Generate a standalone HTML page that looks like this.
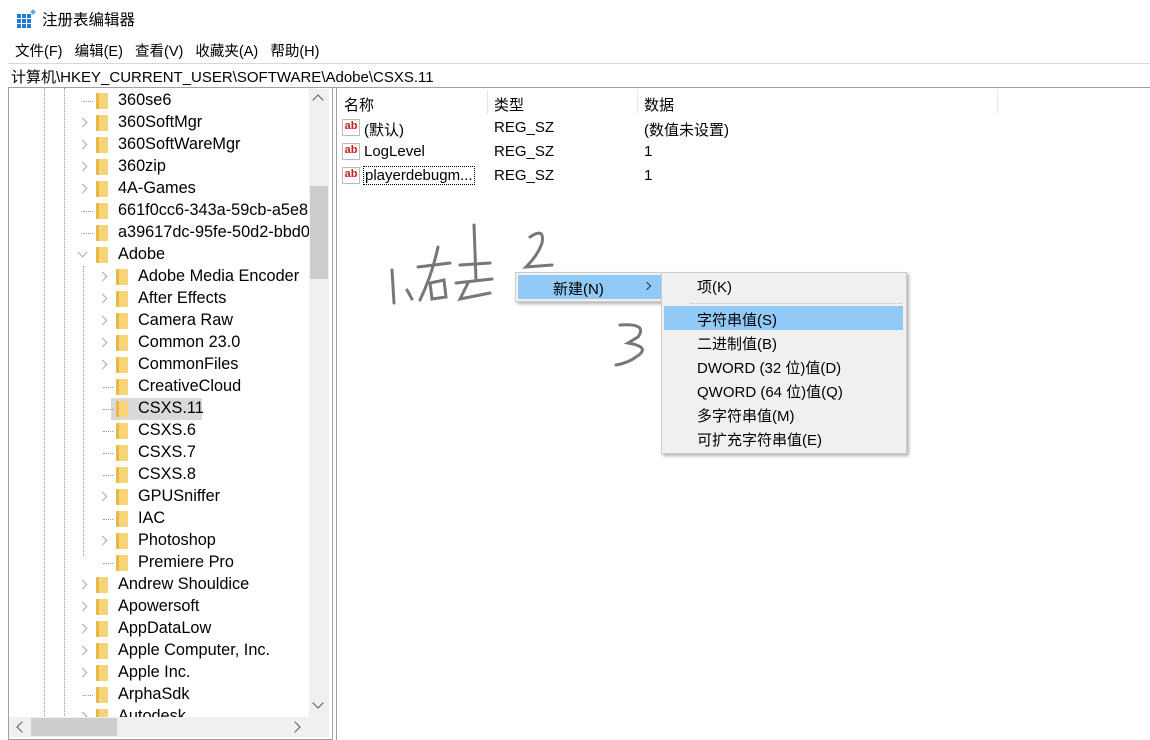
<!DOCTYPE html><html><head><meta charset="utf-8"><style>
*{margin:0;padding:0;box-sizing:border-box}
body{width:1150px;height:740px;background:#fff;font-family:"Liberation Sans","Noto Sans CJK SC",sans-serif;font-size:15px;color:#000;position:relative;overflow:hidden}
.a{position:absolute;white-space:nowrap}
.f{position:absolute;width:12px;height:16px;background:linear-gradient(90deg,#e8b840 0 3px,#f7d37a 3px);border-radius:1px}
.ch{position:absolute;width:7px;height:7px;border-right:1.5px solid #aaa;border-bottom:1.5px solid #aaa;transform:rotate(-45deg)}
.dv{position:absolute;border-left:1px dotted #999;width:0}
.dh{position:absolute;border-top:1px dotted #999;height:0;width:10px}
.ab{position:absolute;width:18px;height:17px;border:1px solid #bbb;background:#fff;font-size:11px;font-weight:bold;color:#c62020;line-height:13px;text-align:center}
.t{font-size:16.3px}
</style></head><body>
<svg class="a" style="left:17px;top:9px" width="20" height="20" viewBox="0 0 20 20"><g fill="#1e7bd0"><rect x="0" y="5" width="4" height="4"/><rect x="5" y="5" width="4" height="4"/><rect x="10" y="5" width="4" height="4"/><rect x="0" y="10" width="4" height="4"/><rect x="5" y="10" width="4" height="4"/><rect x="10" y="10" width="4" height="4"/><rect x="0" y="15" width="4" height="4"/><rect x="5" y="15" width="4" height="4"/><rect x="10" y="15" width="4" height="4"/></g><rect x="14" y="1" width="4" height="4" fill="#5aa8e8" transform="rotate(45 16 3)"/></svg>
<div class="a" style="left:42px;top:8px;font-size:15.5px">注册表编辑器</div>
<div class="a" style="left:15px;top:40px;font-size:14.5px;word-spacing:0">文件(F)&nbsp;&nbsp;&nbsp;编辑(E)&nbsp;&nbsp;&nbsp;查看(V)&nbsp;&nbsp;&nbsp;收藏夹(A)&nbsp;&nbsp;&nbsp;帮助(H)</div>
<div class="a" style="left:8px;top:63px;width:1142px;height:25px;border-top:1px solid #d8d8d8;border-bottom:1px solid #a0a0a0"></div>
<div class="a" style="left:11px;top:66px;font-size:15px">计算机\HKEY_CURRENT_USER\SOFTWARE\Adobe\CSXS.11</div>
<div class="a" style="left:8px;top:88px;width:325px;height:652px;border:1px solid #a0a0a0;border-top:none;overflow:hidden">
<div class="dv" style="left:35px;top:0;height:640px"></div>
<div class="dv" style="left:55px;top:0;height:640px"></div>
</div>
<div class="dv" style="left:83px;top:266px;height:290px"></div>
<div id="tree"></div>
<div class="a" style="left:309px;top:89px;width:20px;height:628px;background:#f0f0f0"></div>
<div class="a" style="left:310px;top:186px;width:18px;height:93px;background:#cdcdcd"></div>
<div class="a" style="left:314px;top:96px;width:8px;height:8px;border-left:1.5px solid #555;border-top:1.5px solid #555;transform:rotate(45deg)"></div>
<div class="a" style="left:314px;top:699px;width:8px;height:8px;border-right:1.5px solid #555;border-bottom:1.5px solid #555;transform:rotate(45deg)"></div>
<div class="a" style="left:9px;top:717px;width:300px;height:20px;background:#f0f0f0"></div>
<div class="a" style="left:31px;top:718px;width:86px;height:18px;background:#cdcdcd"></div>
<div class="a" style="left:18px;top:723px;width:8px;height:8px;border-left:1.5px solid #555;border-bottom:1.5px solid #555;transform:rotate(45deg)"></div>
<div class="a" style="left:291px;top:723px;width:8px;height:8px;border-right:1.5px solid #555;border-top:1.5px solid #555;transform:rotate(45deg)"></div>
<div class="a" style="left:309px;top:717px;width:20px;height:20px;background:#f0f0f0"></div>
<div class="a" style="left:336px;top:88px;width:814px;height:652px;border-left:1px solid #a0a0a0"></div>
<div class="a" style="left:487px;top:90px;height:24px;border-left:1px solid #e5e5e5"></div>
<div class="a" style="left:637px;top:90px;height:24px;border-left:1px solid #e5e5e5"></div>
<div class="a" style="left:997px;top:90px;height:24px;border-left:1px solid #e5e5e5"></div>
<div class="a" style="left:344px;top:94px">名称</div>
<div class="a" style="left:494px;top:94px">类型</div>
<div class="a" style="left:644px;top:94px">数据</div>
<div class="ab" style="left:342px;top:119px">ab</div>
<div class="ab" style="left:342px;top:143px">ab</div>
<div class="ab" style="left:342px;top:167px">ab</div>
<div class="a" style="left:364px;top:119px">(默认)</div>
<div class="a" style="left:364px;top:143px">LogLevel</div>
<div class="a" style="left:363px;top:166px;border:1px dotted #000;padding:0 1px">playerdebugm...</div>
<div class="a" style="left:494px;top:119px">REG_SZ</div>
<div class="a" style="left:494px;top:143px">REG_SZ</div>
<div class="a" style="left:494px;top:167px">REG_SZ</div>
<div class="a" style="left:644px;top:119px">(数值未设置)</div>
<div class="a" style="left:644px;top:143px">1</div>
<div class="a" style="left:644px;top:167px">1</div>
<svg class="a" style="left:380px;top:215px" width="290" height="160" viewBox="0 0 290 160" fill="none" stroke="#777" stroke-width="3" stroke-linecap="round">
<path d="M12 55 L14 88"/><path d="M27 75 L32 84"/>
<path d="M38 52 L70 48"/><path d="M58 32 Q52 60 40 85"/><path d="M50 68 L64 65 L66 82 L52 84 Z"/>
<path d="M80 50 L110 48"/><path d="M94 10 L96 65"/><path d="M76 68 L112 64"/><path d="M88 68 Q82 80 80 84 L110 78"/>
<path d="M150 22 Q165 12 162 28 Q158 40 146 52 L172 50"/>
<path d="M240 110 Q268 108 258 122 L248 128 Q272 132 256 142 Q248 148 236 150"/>
</svg>
<div class="a" style="left:515px;top:272px;width:147px;height:30px;background:#f0f0f0;border:1px solid #ccc;box-shadow:2px 2px 3px rgba(0,0,0,.3)"></div>
<div class="a" style="left:518px;top:275px;width:144px;height:24px;background:#91c9f7"></div>
<div class="a" style="left:553px;top:278px">新建(N)</div>
<div class="a" style="left:644px;top:283px;width:6px;height:6px;border-right:1.2px solid #333;border-top:1.2px solid #333;transform:rotate(45deg)"></div>
<div class="a" style="left:661px;top:272px;width:246px;height:182px;background:#f0f0f0;border:1px solid #ccc;box-shadow:2px 2px 3px rgba(0,0,0,.3)"></div>
<div class="a" style="left:689px;top:303px;width:214px;border-top:1px solid #d8d8d8"></div>
<div class="a" style="left:664px;top:306px;width:239px;height:24px;background:#91c9f7"></div>
<div class="a" style="left:697px;top:278px;line-height:20px">项(K)</div>
<div class="a" style="left:697px;top:309px;line-height:24px">字符串值(S)<br>二进制值(B)<br>DWORD (32 位)值(D)<br>QWORD (64 位)值(Q)<br>多字符串值(M)<br>可扩充字符串值(E)</div>
<script>
var items=[[1,'360se6',0],[1,'360SoftMgr',1],[1,'360SoftWareMgr',1],[1,'360zip',1],[1,'4A-Games',1],[1,'661f0cc6-343a-59cb-a5e8',0],[1,'a39617dc-95fe-50d2-bbd0',0],[1,'Adobe',2],[2,'Adobe Media Encoder',1],[2,'After Effects',1],[2,'Camera Raw',1],[2,'Common 23.0',1],[2,'CommonFiles',1],[2,'CreativeCloud',0],[2,'CSXS.11',0,1],[2,'CSXS.6',0],[2,'CSXS.7',0],[2,'CSXS.8',0],[2,'GPUSniffer',1],[2,'IAC',0],[2,'Photoshop',1],[2,'Premiere Pro',0],[1,'Andrew Shouldice',1],[1,'Apowersoft',1],[1,'AppDataLow',1],[1,'Apple Computer, Inc.',1],[1,'Apple Inc.',1],[1,'ArphaSdk',0],[1,'Autodesk',1]];
var h='';items.forEach(function(it,i){var c=101+22*i,lv=it[0],fx=lv==1?96:116,tx=fx+22;
if(it[3])h+='<div class="a" style="left:111px;top:'+(c-11)+'px;width:91px;height:22px;background:#d9d9d9"></div>';
h+='<div class="f" style="left:'+fx+'px;top:'+(c-8)+'px"></div>';
if(it[2]==1)h+='<div class="ch" style="left:'+(fx-17)+'px;top:'+(c-4)+'px"></div>';
else if(it[2]==2)h+='<div class="ch" style="left:'+(fx-17)+'px;top:'+(c-6)+'px;transform:rotate(45deg)"></div>';
else h+='<div class="dh" style="left:'+(fx-13)+'px;top:'+c+'px"></div>';
h+='<div class="a t" style="left:'+tx+'px;top:'+(c-10)+'px">'+it[1]+'</div>';});
h='<div class="a" style="left:9px;top:89px;width:300px;height:628px;overflow:hidden"><div style="position:relative;left:-9px;top:-89px">'+h+'</div></div>';
document.getElementById('tree').outerHTML=h;
</script>
</body></html>
